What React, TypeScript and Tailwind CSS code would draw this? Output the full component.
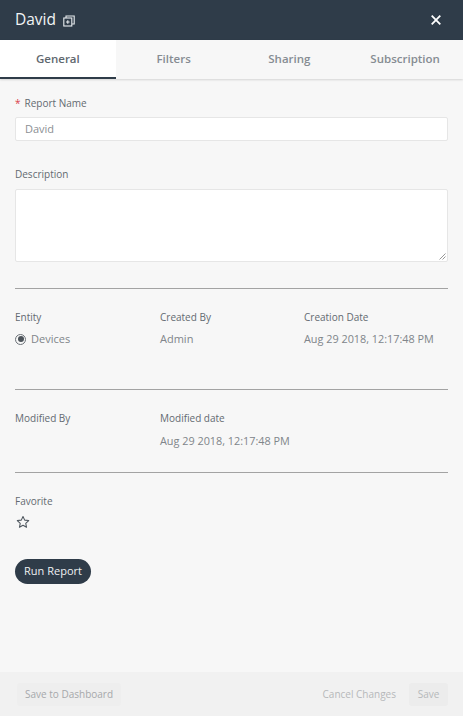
export default function App() {
  const tabs = ["General", "Filters", "Sharing", "Subscription"];
  const label = "h-4 pb-[2px] flex items-center";

  return (
    <div className="w-[463px] h-[716px] flex flex-col overflow-hidden bg-[#f7f7f7] text-[#636a71] font-['Open_Sans',sans-serif]">
      {/* Header */}
      <div className="h-10 shrink-0 flex items-center justify-between pl-[15px] pr-[22px] bg-[#2f3c49]">
        <div className="flex items-center gap-[7px]">
          <span className="text-[15.5px] text-[#f2f4f5]">David</span>
          <svg width="12" height="12" viewBox="0 0 12 12" fill="none" stroke="#e8ebee" strokeWidth="1.1" className="mt-[2px]">
            <rect x="0.8" y="3" width="8" height="8" />
            <path d="M3 3V1h8.2v8H9" />
            <path d="M4.8 5.2v3.6M3 7h3.6" />
          </svg>
        </div>
        <svg width="10" height="10" viewBox="0 0 10 10" stroke="#ffffff" strokeWidth="1.8">
          <path d="M0.7 0.7l8.6 8.6M9.3 0.7l-8.6 8.6" />
        </svg>
      </div>

      {/* Tabs */}
      <div className="h-[39px] shrink-0 grid grid-cols-4 shadow-[0_1px_2px_rgba(0,0,0,0.14)] bg-[#f7f7f7]">
        {tabs.map((tab, i) => (
          <div
            key={tab}
            className={
              i === 0
                ? "flex items-center justify-center bg-white border-b-2 border-[#2f3c49] text-[11.5px] font-semibold text-[#5f686f]"
                : "flex items-center justify-center border-b-2 border-transparent text-[11.5px] font-semibold text-[#868c92]"
            }
          >
            {tab}
          </div>
        ))}
      </div>

      {/* Body */}
      <div className="flex-1 flex flex-col px-[15px] pt-[17px] text-[10px]">
        <div className={label + " gap-[4px]"}>
          <span className="text-[#d9404a] text-[10px]">*</span>
          <span>Report Name</span>
        </div>
        <div className="mt-[5px] h-[24px] flex items-center px-[9px] pt-px bg-white border border-[#e6e6e6] rounded-[2px] text-[11px] text-[#8b8f94]">
          David
        </div>

        <div className={"mt-[26px] " + label}>Description</div>
        <div className="relative mt-[6px] h-[73px] bg-white border border-[#e6e6e6] rounded-[2px]">
          <svg width="7" height="7" viewBox="0 0 7 7" stroke="#8c8c8c" strokeWidth="0.9" className="absolute right-[1px] bottom-[1px]">
            <path d="M0.5 6.5l6-6M3.5 6.5l3-3" />
          </svg>
        </div>

        <div className="mt-[26px] h-px bg-[#a3a3a3]" />

        <div className="mt-[21px] grid grid-cols-[145px_144px_1fr]">
          <div className={label}>Entity</div>
          <div className={label}>Created By</div>
          <div className={label}>Creation Date</div>
          <div className="mt-[5px] h-4 flex items-center gap-[5px] text-[#80858a] text-[11px]">
            <span className="w-[11px] h-[11px] rounded-full border border-[#6c7278] flex items-center justify-center">
              <span className="w-[6px] h-[6px] rounded-full bg-[#4c535a]" />
            </span>
            Devices
          </div>
          <div className="mt-[5px] h-4 flex items-center text-[#80858a] text-[11px]">Admin</div>
          <div className="mt-[5px] pt-px h-4 flex items-center text-[#80858a] text-[10.85px] whitespace-nowrap">Aug 29 2018, 12:17:48 PM</div>
        </div>

        <div className="mt-[42px] h-px bg-[#a3a3a3]" />

        <div className="mt-[21px] grid grid-cols-[145px_1fr]">
          <div className={label}>Modified By</div>
          <div className={label}>Modified date</div>
          <div className="mt-[6px] h-4" />
          <div className="mt-[6px] h-4 flex items-center text-[#80858a] text-[10.85px] whitespace-nowrap">Aug 29 2018, 12:17:48 PM</div>
        </div>

        <div className="mt-[23px] h-px bg-[#a3a3a3]" />

        <div className={"mt-[21px] " + label}>Favorite</div>
        <svg width="14" height="14" viewBox="0 0 24 24" fill="none" stroke="#4d555d" strokeWidth="1.8" strokeLinejoin="round" className="mt-[5px] ml-[1px]">
          <path d="M12 2.5l2.9 6.3 6.9.8-5.1 4.7 1.4 6.8-6.1-3.4-6.1 3.4 1.4-6.8-5.1-4.7 6.9-.8z" />
        </svg>

        <button className="mt-[30px] w-[76px] h-[25px] rounded-full bg-[#2f3c49] text-[#eef0f2] text-[11px] flex items-center justify-center">
          Run Report
        </button>
      </div>

      {/* Footer */}
      <div className="h-[44px] shrink-0 flex items-center justify-between pl-[17px] pr-[15px] bg-[#f1f1f1] text-[10px] text-[#a6a8ab]">
        <div className="h-[23px] px-[8px] flex items-center rounded-[3px] bg-[#eeeeee]">Save to Dashboard</div>
        <div className="flex items-center gap-[13px]">
          <span className="text-[#b6b8ba]">Cancel Changes</span>
          <div className="h-[23px] w-[39px] flex items-center justify-center rounded-[3px] bg-[#ececec] text-[#b6b8ba]">Save</div>
        </div>
      </div>
    </div>
  );
}
